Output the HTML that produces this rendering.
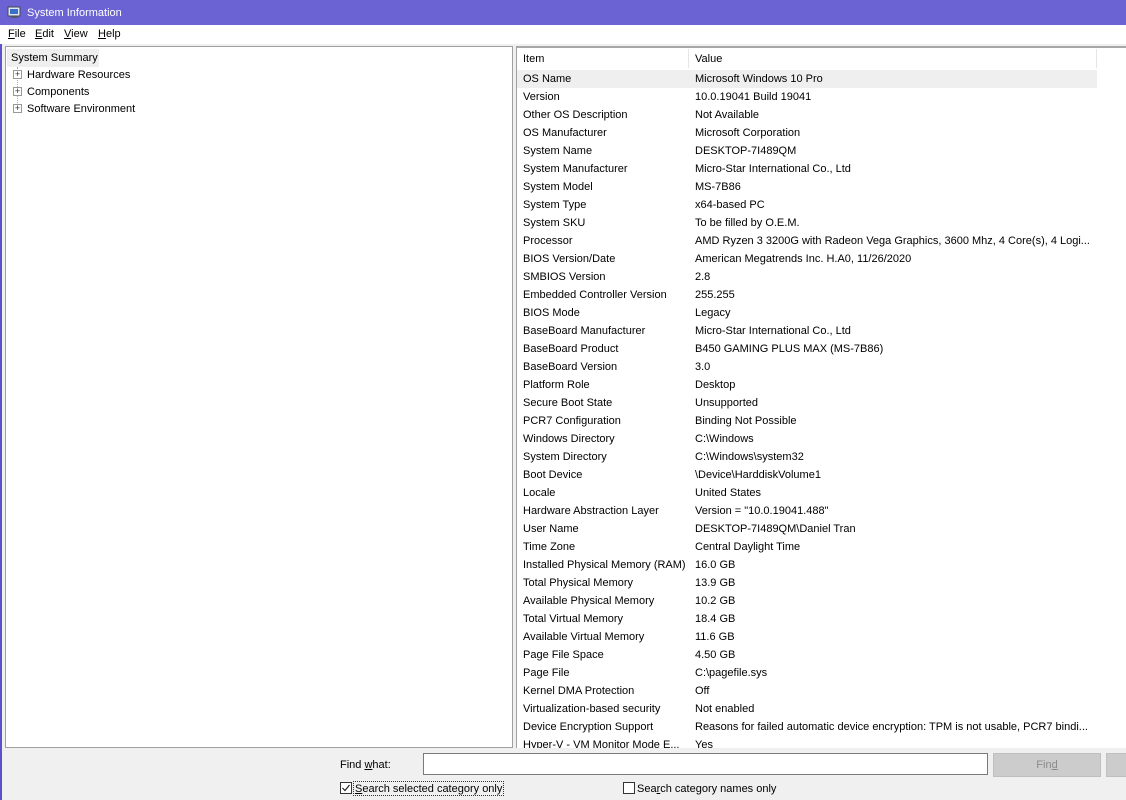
<!DOCTYPE html>
<html><head><meta charset="utf-8"><style>
*{margin:0;padding:0;box-sizing:border-box}
body{width:1126px;height:800px;overflow:hidden;background:#f0f0f0;font-family:"Liberation Sans",sans-serif;font-size:11px;color:#000;position:relative}
.title{position:absolute;left:0;top:0;width:1126px;height:25px;background:#6b63d4;color:#fff;font-size:11px}
.title span{position:absolute;left:27px;top:7px}
.menu{position:absolute;left:0;top:25px;width:1126px;height:19px;background:#fff}
.menu span{position:absolute;top:3px}
.lb{position:absolute;left:0;top:25px;width:2px;height:775px;background:#5a52c8}
.left{position:absolute;left:5px;top:46px;width:508px;height:702px;background:#fff;border:1px solid #a0a0a0}
.left div{position:absolute;white-space:nowrap}
.pm{position:absolute;width:9px;height:9px;border:1px solid #999;background:#fff;font-size:9px;line-height:7px;text-align:center;color:#333}
.right{position:absolute;left:516px;top:46px;width:610px;height:702px;background:#fff;border-top:2px solid #a8a8a8;border-left:1px solid #a0a0a0;overflow:hidden}
.hdr{position:absolute;left:0;top:1px;width:580px;height:19px;border-right:1px solid #e5e5e5}
.hdr .c{position:absolute;top:4px}
.row{position:absolute;left:0;width:580px;height:18px}
.row .a{position:absolute;left:6px;top:3px;white-space:nowrap}
.row .b{position:absolute;left:178px;top:3px;white-space:nowrap}
.sel{background:#efefef}
.inp{position:absolute;left:423px;top:753px;width:565px;height:22px;background:#fff;border:1px solid #7a7a7a}
.btn{position:absolute;top:753px;height:24px;background:#cccccc;border:1px solid #bfbfbf;color:#8a8a8a;text-align:center;line-height:22px}
.cb{position:absolute;width:12px;height:12px;border:1px solid #333;background:#fff}
u{text-decoration:underline}
</style></head><body>
<div class="title"><svg style="position:absolute;left:7px;top:5px" width="15" height="15"><rect x="1" y="2" width="12" height="9" fill="#dfe6f3" stroke="#445" stroke-width="1"/><rect x="3" y="4" width="8" height="5" fill="#3a6fc9"/><rect x="4" y="11" width="7" height="2" fill="#556"/></svg><span>System Information</span></div>
<div class="lb"></div>
<div class="menu"><span style="left:8px"><u>F</u>ile</span><span style="left:35px"><u>E</u>dit</span><span style="left:64px"><u>V</u>iew</span><span style="left:98px"><u>H</u>elp</span></div>
<div class="left">
<div style="left:1px;top:2px;width:92px;height:18px;background:#efefef"></div>
<div style="left:5px;top:5px">System Summary</div>
<div style="left:11px;top:20px;width:0;height:42px;border-left:1px dotted #aaa"></div>
<div class="pm" style="left:7px;top:23px">+</div><div style="left:21px;top:22px">Hardware Resources</div>
<div class="pm" style="left:7px;top:40px">+</div><div style="left:21px;top:39px">Components</div>
<div class="pm" style="left:7px;top:57px">+</div><div style="left:21px;top:56px">Software Environment</div>
</div>
<div class="right">
<div class="hdr"><span class="c" style="left:6px">Item</span><div style="position:absolute;left:171px;top:0;width:1px;height:19px;background:#e5e5e5"></div><span class="c" style="left:178px">Value</span></div>
<div id="rows"></div>
</div>
<div style="position:absolute;left:340px;top:759px"><span>Find <u>w</u>hat:</span></div>
<div class="inp"></div>
<div class="btn" style="left:993px;width:108px">Fin<u>d</u></div>
<div class="btn" style="left:1106px;width:30px"></div>
<div class="cb" style="left:340px;top:782px"><svg width="10" height="10" style="position:absolute;left:0;top:0"><path d="M1.5 5 L4 7.5 L8.5 2" stroke="#222" fill="none" stroke-width="1.2"/></svg></div>
<div style="position:absolute;left:353px;top:781px;border:1px dotted #333;padding:0 1px;height:15px;line-height:14px"><u>S</u>earch selected category only</div>
<div class="cb" style="left:623px;top:782px"></div>
<div style="position:absolute;left:637px;top:783px">Sea<u>r</u>ch category names only</div>
<script>
var d=[["OS Name","Microsoft Windows 10 Pro"],["Version","10.0.19041 Build 19041"],["Other OS Description","Not Available"],["OS Manufacturer","Microsoft Corporation"],["System Name","DESKTOP-7I489QM"],["System Manufacturer","Micro-Star International Co., Ltd"],["System Model","MS-7B86"],["System Type","x64-based PC"],["System SKU","To be filled by O.E.M."],["Processor","AMD Ryzen 3 3200G with Radeon Vega Graphics, 3600 Mhz, 4 Core(s), 4 Logi..."],["BIOS Version/Date","American Megatrends Inc. H.A0, 11/26/2020"],["SMBIOS Version","2.8"],["Embedded Controller Version","255.255"],["BIOS Mode","Legacy"],["BaseBoard Manufacturer","Micro-Star International Co., Ltd"],["BaseBoard Product","B450 GAMING PLUS MAX (MS-7B86)"],["BaseBoard Version","3.0"],["Platform Role","Desktop"],["Secure Boot State","Unsupported"],["PCR7 Configuration","Binding Not Possible"],["Windows Directory","C:\\Windows"],["System Directory","C:\\Windows\\system32"],["Boot Device","\\Device\\HarddiskVolume1"],["Locale","United States"],["Hardware Abstraction Layer","Version = \"10.0.19041.488\""],["User Name","DESKTOP-7I489QM\\Daniel Tran"],["Time Zone","Central Daylight Time"],["Installed Physical Memory (RAM)","16.0 GB"],["Total Physical Memory","13.9 GB"],["Available Physical Memory","10.2 GB"],["Total Virtual Memory","18.4 GB"],["Available Virtual Memory","11.6 GB"],["Page File Space","4.50 GB"],["Page File","C:\\pagefile.sys"],["Kernel DMA Protection","Off"],["Virtualization-based security","Not enabled"],["Device Encryption Support","Reasons for failed automatic device encryption: TPM is not usable, PCR7 bindi..."],["Hyper-V - VM Monitor Mode E...","Yes"]];
d.forEach(function(r,i){var e=document.createElement("div");e.className="row"+(i==0?" sel":"");e.style.top=(22+i*18)+"px";var a=document.createElement("span");a.className="a";a.textContent=r[0];var b=document.createElement("span");b.className="b";b.textContent=r[1];e.appendChild(a);e.appendChild(b);document.getElementById("rows").appendChild(e);});
</script>
</body></html>
